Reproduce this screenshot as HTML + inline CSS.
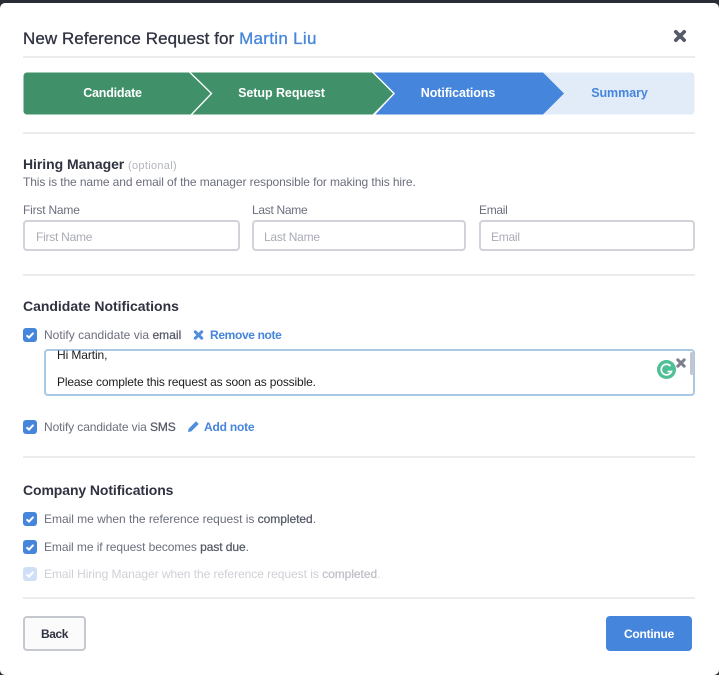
<!DOCTYPE html>
<html><head><meta charset="utf-8">
<style>
html,body{margin:0;padding:0;width:719px;height:675px;overflow:hidden;background:#2b2d36}
*{box-sizing:border-box}
#m{position:absolute;left:0;top:3px;width:719px;height:672px;background:#fff;border-radius:5px;overflow:hidden;font-family:"Liberation Sans",sans-serif}
.t{position:absolute;white-space:nowrap;font-size:12px;line-height:16px;color:#6b6e7d;margin-top:-3px}
.hr{position:absolute;left:23px;width:672px;height:2px;background:#ebecee}
.inp{position:absolute;height:31px;top:217px;border:2px solid #d2d3da;border-radius:4px;background:#fff}
.ph{color:#a9abb6;letter-spacing:-.25px}
.cb{position:absolute;left:23px;width:14px;height:14px;border-radius:3px;background:#4585dc}
.cb svg{position:absolute;left:0;top:0}
.h{color:#2f3240;font-size:14px;font-weight:bold;line-height:18px;letter-spacing:-.02px}
.lnk{color:#4585dc;font-weight:bold}
.w{color:#fff;font-weight:bold;font-size:12.5px;letter-spacing:-.05px;text-align:center}
.s{color:#565a68;-webkit-text-stroke:.25px #565a68}
</style></head><body>
<div id="m">
<div class="t" style="left:23px;top:26px;font-size:17px;line-height:20px;color:#2f3240;letter-spacing:.06px;-webkit-text-stroke:.3px #2f3240;margin:0">New Reference Request for <span style="color:#4585dc;-webkit-text-stroke:.3px #4585dc;letter-spacing:.3px">Martin Liu</span></div>
<svg style="position:absolute;left:673px;top:26px" width="14" height="14" viewBox="0 0 14 14"><path d="M2.800 2.800L11.200 11.200M11.200 2.800L2.800 11.200" stroke="#565a68" stroke-width="3.600" stroke-linecap="round"/></svg>
<div class="hr" style="top:53px"></div>

<svg style="position:absolute;left:23px;top:69px" width="672" height="44" viewBox="0 0 672 44">
<path d="M4 .5H668a3.500 3.500 0 0 1 3.500 3.500V39a3.500 3.500 0 0 1-3.500 3.500H4A3.500 3.500 0 0 1 .5 39V4A3.500 3.500 0 0 1 4 .5Z" fill="#e2ecf9"/>
<path d="M351 .5H520L541 21.500L520 42.500H351L372 21.500Z" fill="#4585dc"/>
<path d="M4 .5H349.500L370.500 21.500L349.500 42.500H4A3.500 3.500 0 0 1 .5 39V4A3.500 3.500 0 0 1 4 .5Z" fill="#40906a"/>
<path d="M166.500 0L188.500 21.500L168 43M349.500 0L371 21.500L351 43" fill="none" stroke="#fff" stroke-width="1.300"/>
</svg>
<div class="t w" style="left:23px;width:179px;top:85px;letter-spacing:-.2px">Candidate</div>
<div class="t w" style="left:190px;width:183px;top:85px">Setup Request</div>
<div class="t w" style="left:375px;width:166px;top:85px;letter-spacing:-.1px">Notifications</div>
<div class="t w" style="left:545px;width:149px;top:85px;color:#4585dc">Summary</div>
<div class="hr" style="top:129px"></div>

<div class="t h" style="left:23px;top:152px;margin:0;letter-spacing:-.05px">Hiring Manager <span style="font-size:11px;font-weight:400;color:#b3b5be;letter-spacing:.3px">(optional)</span></div>
<div class="t" style="left:23px;top:174px;letter-spacing:-.1px">This is the name and email of the manager responsible for making this hire.</div>

<div class="t" style="left:23px;top:202px;letter-spacing:-.2px">First Name</div>
<div class="t" style="left:252px;top:202px;letter-spacing:-.3px">Last Name</div>
<div class="t" style="left:479px;top:202px;letter-spacing:-.3px">Email</div>
<div class="inp" style="left:23px;width:217px"></div>
<div class="inp" style="left:252px;width:214px"></div>
<div class="inp" style="left:479px;width:216px"></div>
<div class="t ph" style="left:36px;top:229px">First Name</div>
<div class="t ph" style="left:264px;top:229px">Last Name</div>
<div class="t ph" style="left:491px;top:229px">Email</div>
<div class="hr" style="top:271px"></div>

<div class="t h" style="left:23px;top:294px;margin:0">Candidate Notifications</div>
<div class="cb" style="top:325px"><svg width="14" height="14"><path d="M3.500 7.300L6 9.600L10.500 4.800" fill="none" stroke="#fff" stroke-width="2"/></svg></div>
<div class="t" style="left:44px;top:327px;letter-spacing:.02px">Notify candidate via <span class="s">email</span></div>
<svg style="position:absolute;left:193px;top:326px" width="11" height="12" viewBox="0 0 11 12"><path d="M2.300 2.800L8.700 9.200M8.700 2.800L2.300 9.200" stroke="#4f8edc" stroke-width="3" stroke-linecap="round"/></svg>
<div class="t lnk" style="left:210px;top:327px;letter-spacing:-.35px">Remove note</div>

<div style="position:absolute;left:44px;top:346px;width:651px;height:47px;border:2px solid #a8c8e4;border-radius:4px;background:#fff"></div>
<div class="t" style="left:57px;top:347px;letter-spacing:-.1px;color:#1c1c1f">Hi Martin,</div>
<div class="t" style="left:57px;top:374px;letter-spacing:-.15px;color:#1c1c1f">Please complete this request as soon as possible.</div>
<div style="position:absolute;left:690px;top:349px;width:4px;height:23px;background:#c3c6d0;border-radius:2px"></div>
<svg style="position:absolute;left:657px;top:356px" width="19" height="21" viewBox="0 0 19 21"><circle cx="9.500" cy="10.500" r="9.500" fill="#4fbf95"/><path d="M13.500 7A5.300 5.300 0 1 0 14.500 12.500H10.500" fill="none" stroke="#fff" stroke-width="1.700"/></svg>
<svg style="position:absolute;left:675px;top:354px" width="12" height="12" viewBox="0 0 12 12"><path d="M2.800 2.800L9.200 9.200M9.200 2.800L2.800 9.200" stroke="#7d7f8c" stroke-width="3" stroke-linecap="round"/></svg>

<div class="cb" style="top:417px"><svg width="14" height="14"><path d="M3.500 7.300L6 9.600L10.500 4.800" fill="none" stroke="#fff" stroke-width="2"/></svg></div>
<div class="t" style="left:44px;top:419px;letter-spacing:-.1px">Notify candidate via <span class="s">SMS</span></div>
<svg style="position:absolute;left:187px;top:417px" width="13" height="13" viewBox="0 0 13 13"><path d="M1 12L1.600 8.700L9 1.300L11.700 4L4.300 11.400Z" fill="#4f8edc"/></svg>
<div class="t lnk" style="left:204px;top:419px;letter-spacing:-.2px">Add note</div>
<div class="hr" style="top:453px"></div>

<div class="t h" style="left:23px;top:478px;margin:0;letter-spacing:-.1px">Company Notifications</div>
<div class="cb" style="top:509px"><svg width="14" height="14"><path d="M3.500 7.300L6 9.600L10.500 4.800" fill="none" stroke="#fff" stroke-width="2"/></svg></div>
<div class="t" style="left:44px;top:511px;letter-spacing:-.03px">Email me when the reference request is <span class="s">completed</span>.</div>
<div class="cb" style="top:537px"><svg width="14" height="14"><path d="M3.500 7.300L6 9.600L10.500 4.800" fill="none" stroke="#fff" stroke-width="2"/></svg></div>
<div class="t" style="left:44px;top:539px;letter-spacing:-.07px">Email me if request becomes <span class="s">past due</span>.</div>
<div class="cb" style="top:564px;background:#cfe0f6"><svg width="14" height="14"><path d="M3.500 7.300L6 9.600L10.500 4.800" fill="none" stroke="#fff" stroke-width="2"/></svg></div>
<div class="t" style="left:44px;top:566px;letter-spacing:-.04px;color:#cfd0d6">Email Hiring Manager when the reference request is <span style="color:#bfc0c8;-webkit-text-stroke:.25px #bfc0c8">completed</span>.</div>
<div class="hr" style="top:594px"></div>

<div style="position:absolute;left:23px;top:613px;width:63px;height:35px;border:2px solid #c6c8d0;border-radius:4px;background:#fbfbfc"></div>
<div class="t" style="left:23px;width:63px;text-align:center;top:626px;font-weight:bold;color:#2f3240;letter-spacing:-.4px">Back</div>
<div style="position:absolute;left:606px;top:613px;width:86px;height:35px;border-radius:4px;background:#4585dc"></div>
<div class="t w" style="left:606px;width:86px;top:626px;font-size:12px;letter-spacing:-.25px">Continue</div>
</div>
</body></html>
